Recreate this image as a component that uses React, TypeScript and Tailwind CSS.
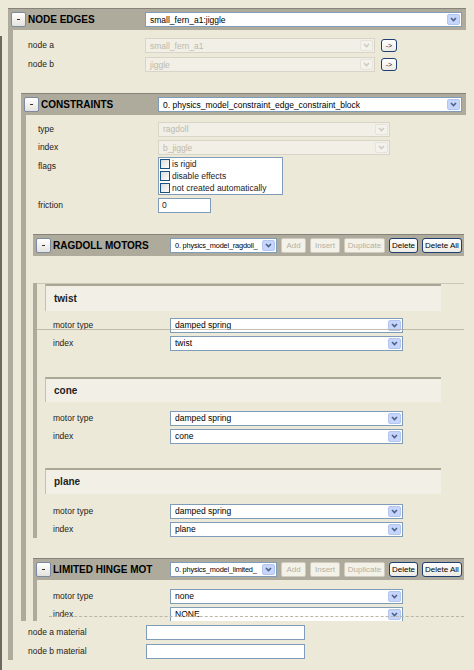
import React from 'react';

const Chevron = ({ disabled }: { disabled?: boolean }) => (
  <svg width="7" height="5" viewBox="0 0 7 5">
    <path d="M1 1l2.5 2.5L6 1" fill="none" stroke={disabled ? '#cfccbf' : '#4d6185'} strokeWidth="1.6" />
  </svg>
);

const Select = ({
  value,
  className = '',
  textClass = 'leading-none',
  disabled,
}: {
  value: string;
  className?: string;
  textClass?: string;
  disabled?: boolean;
}) => (
  <div
    className={`flex h-[15px] items-center border ${
      disabled ? 'border-[#d8d5c8] bg-[#f1efe6] text-[#bdbaac]' : 'border-[#7f9db9] bg-white text-black'
    } ${className}`}
  >
    <span className={`flex-1 overflow-hidden whitespace-nowrap pl-[4px] ${textClass}`}>{value}</span>
    <span
      className={`mr-px flex h-[11px] w-[13px] shrink-0 items-center justify-center rounded-[2px] border ${
        disabled ? 'border-[#e6e3d8] bg-[#f3f2ec]' : 'border-[#b4c6f0] bg-[#c5d5fb]'
      }`}
    >
      <Chevron disabled={disabled} />
    </span>
  </div>
);

const Input = ({ value = '', className = '' }: { value?: string; className?: string }) => (
  <div className={`flex h-[15px] items-center border border-[#7f9db9] bg-white pl-[3px] leading-none ${className}`}>
    {value}
  </div>
);

const MinusButton = () => (
  <div className="flex h-[15px] w-[15px] shrink-0 items-center justify-center rounded-[2px] border border-[#7d8aa3] bg-gradient-to-b from-[#ffffff] to-[#e4e3dd]">
    <span className="block h-px w-[3px] bg-[#333]" />
  </div>
);

const XPButton = ({ label, disabled, w }: { label: string; disabled?: boolean; w: string }) => (
  <div
    className={`flex h-[15px] items-center justify-center border text-[8px] leading-none ${w} ${
      disabled
        ? 'rounded-[2px] border-[#cfccbe] bg-[#f3f1e8] text-[#b4b1a3]'
        : 'rounded-[3px] border-[#1f3f70] bg-gradient-to-b from-[#ffffff] to-[#ecebe4] text-black'
    }`}
  >
    {label}
  </div>
);

const Header = ({ title, children }: { title: string; children: React.ReactNode }) => (
  <div className="flex h-[22px] items-center border-t border-[#86837a] bg-[#aeab9c] pl-[3px] pr-[4px]">
    <MinusButton />
    <span className="ml-[2px] w-[117px] shrink-0 whitespace-nowrap text-[10px] font-bold leading-none text-black">
      {title}
    </span>
    {children}
  </div>
);

const ListHeaderControls = ({ value }: { value: string }) => (
  <div className="flex items-center">
    <Select value={value} className="w-[107px]" textClass="text-[7.4px] leading-[12px] tracking-[-0.2px]" />
    <div className="ml-[4px] flex items-center gap-[4px]">
      <XPButton label="Add" disabled w="w-[25px]" />
      <XPButton label="Insert" disabled w="w-[30px]" />
      <XPButton label="Duplicate" disabled w="w-[41px]" />
      <XPButton label="Delete" w="w-[29px]" />
      <XPButton label="Delete All" w="w-[40px]" />
    </div>
  </div>
);

const MotorRows = ({ type, index }: { type: string; index: string }) => (
  <div className="flex flex-col gap-[3px] pl-[16px]">
    <div className="flex items-center">
      <span className="w-[117px]">motor type</span>
      <Select value={type} className="w-[233px]" />
    </div>
    <div className="flex items-center">
      <span className="w-[117px]">index</span>
      <Select value={index} className="w-[233px]" />
    </div>
  </div>
);

const GroupBox = ({ title, h }: { title: string; h: string }) => (
  <div
    className={`ml-[8px] flex w-[396px] items-center border-t-2 border-l border-t-[#aaa796] border-l-[#c4c1b1] bg-[#f2f0e6] pl-[8px] text-[10px] font-bold ${h}`}
  >
    {title}
  </div>
);

export default function App() {
  return (
    <div className="relative h-[670px] w-[474px] overflow-hidden bg-[#ece9d8] pl-2 pt-2 font-['Liberation_Sans',Arial,sans-serif] text-[8.5px] leading-none text-[#222]">
      <div className="absolute bottom-0 left-0 top-[36px] w-[2px] bg-[#6b6a60]" />
      {/* NODE EDGES */}
      <div className="w-[458px]">
        <Header title="NODE EDGES">
          <Select value="small_fern_a1:jiggle" className="w-[317px]" textClass="leading-[12px]" />
        </Header>
        <div className="border-l-[5px] border-[#aeab9c] pb-px">
          <div className="flex flex-col gap-[4px] pl-[15px] pt-[8px]">
            {[
              ['node a', 'small_fern_a1'],
              ['node b', 'jiggle'],
            ].map(([label, v]) => (
              <div key={label} className="flex items-center">
                <span className="w-[117px]">{label}</span>
                <Select value={v} disabled className="w-[230px]" textClass="leading-[12px]" />
                <div className="ml-[6px] flex h-[13px] w-[16px] items-center justify-center rounded-[3px] border border-[#1f3f70] bg-gradient-to-b from-white to-[#ecebe4] text-[7px]">
                  -&gt;
                </div>
              </div>
            ))}
          </div>

          {/* CONSTRAINTS */}
          <div className="ml-[8px] mt-[21px] h-[528px] w-[445px] overflow-hidden">
            <Header title="CONSTRAINTS">
              <Select
                value="0. physics_model_constraint_edge_constraint_block"
                className="w-[305px]"
                textClass="leading-[12px]"
              />
            </Header>
            <div className="relative border-l-[5px] border-[#aeab9c] pb-[40px]">
              <div className="flex flex-col pl-[12px] pt-[7px]">
                <div className="flex items-center">
                  <span className="w-[120px]">type</span>
                  <Select value="ragdoll" disabled className="w-[232px]" />
                </div>
                <div className="mt-[3px] flex items-center">
                  <span className="w-[120px]">index</span>
                  <Select value="b_jiggle" disabled className="w-[232px]" textClass="leading-[12px]" />
                </div>
                <div className="mt-[2px] flex items-start">
                  <span className="w-[120px] pt-[5px]">flags</span>
                  <div className="flex h-[38px] w-[125px] flex-col gap-[2px] border border-[#7f9db9] bg-white pl-px pt-[1px]">
                    {['is rigid', 'disable effects', 'not created automatically'].map((f) => (
                      <div key={f} className="flex items-center gap-[2px]">
                        <span className="h-[10px] w-[10px] border border-[#1c5180] bg-gradient-to-br from-[#dcdcd7] to-white" />
                        <span>{f}</span>
                      </div>
                    ))}
                  </div>
                </div>
                <div className="mt-[3px] flex items-center">
                  <span className="w-[120px]">friction</span>
                  <Input value="0" className="w-[53px]" />
                </div>
              </div>

              {/* RAGDOLL MOTORS */}
              <div className="ml-[7px] mt-[21px] w-[431px]">
                <Header title="RAGDOLL MOTORS">
                  <ListHeaderControls value="0. physics_model_ragdoll_" />
                </Header>
                <div className="relative border-l-[4px] border-[#aeab9c]">
                  <div className="mt-[27px] border-t border-[#cac7b8]">
                    <GroupBox title="twist" h="h-[27px]" />
                  </div>
                  <div className="relative mt-[7px]">
                    <MotorRows type="damped spring" index="twist" />
                    <div className="absolute left-[-4px] right-0 top-[11px] h-px bg-[#a9a697]/70" />
                  </div>
                  <div className="mt-[26px]">
                    <GroupBox title="cone" h="h-[25px]" />
                  </div>
                  <div className="mt-[9px]">
                    <MotorRows type="damped spring" index="cone" />
                  </div>
                  <div className="mt-[24px]">
                    <GroupBox title="plane" h="h-[26px]" />
                  </div>
                  <div className="mt-[10px] pb-px">
                    <MotorRows type="damped spring" index="plane" />
                  </div>
                </div>
              </div>

              {/* LIMITED HINGE MOTORS */}
              <div className="ml-[7px] mt-[20px] w-[431px]">
                <Header title="LIMITED HINGE MOT">
                  <ListHeaderControls value="0. physics_model_limited_" />
                </Header>
                <div className="relative border-l-[4px] border-[#aeab9c]">
                  <div className="pt-[9px]">
                    <MotorRows type="none" index="NONE" />
                  </div>
                  <div className="absolute left-[12px] right-0 top-[36px] border-t border-dashed border-[#b9b6a8]" />
                </div>
              </div>
            </div>
          </div>

          <div className="mt-[4px] flex flex-col gap-[4px] pl-[15px]">
            <div className="flex items-center">
              <span className="w-[118px]">node a material</span>
              <Input className="w-[159px]" />
            </div>
            <div className="flex items-center">
              <span className="w-[118px]">node b material</span>
              <Input className="w-[159px]" />
            </div>
          </div>
        </div>
      </div>
    </div>
  );
}
